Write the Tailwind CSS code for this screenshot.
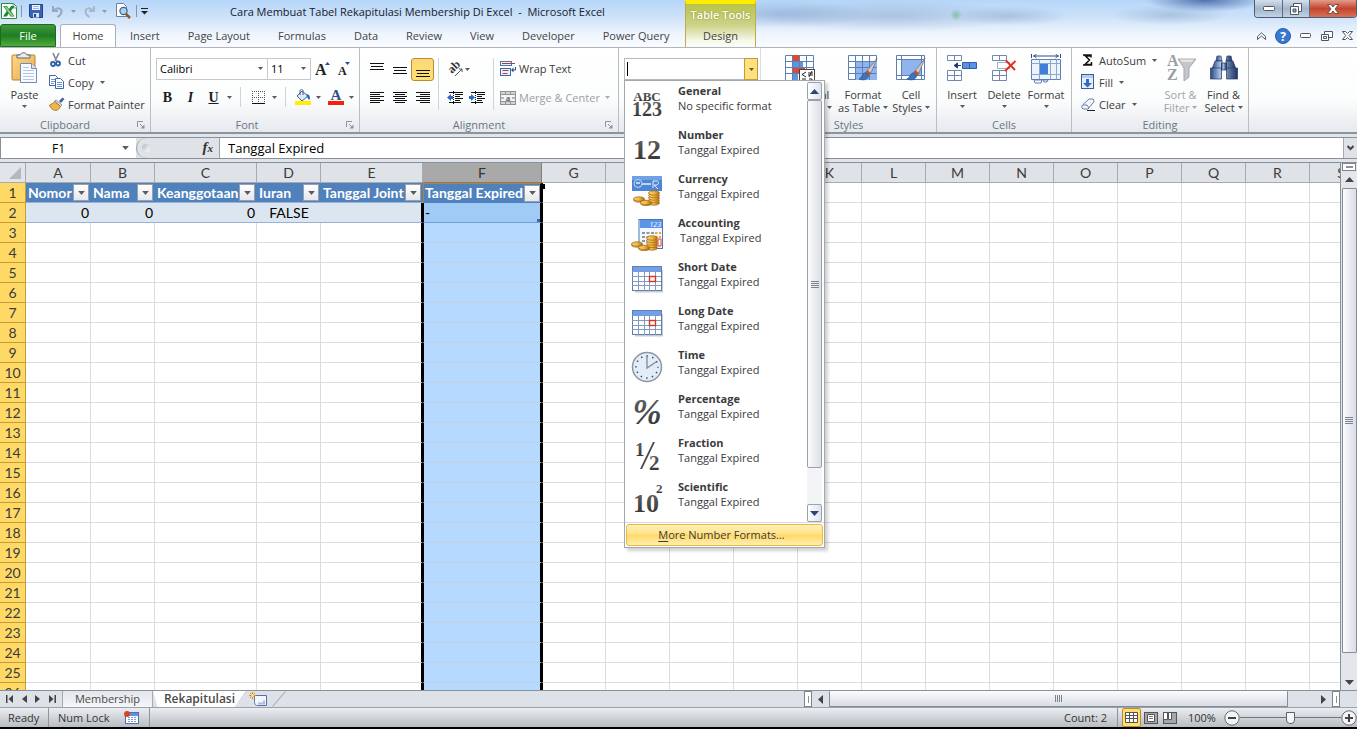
<!DOCTYPE html>
<html lang="en">
<head>
<meta charset="utf-8">
<title>Cara Membuat Tabel Rekapitulasi Membership Di Excel - Microsoft Excel</title>
<script src="https://cdn.jsdelivr.net/npm/@tailwindcss/browser@4"></script>
</head>
<body class="h-screen overflow-hidden flex flex-col bg-[#dfe5ec] font-['Open_Sans','Noto_Sans',sans-serif] text-[11px] leading-[13px] text-[#3b3b3b] select-none">

<svg class="absolute w-0 h-0" aria-hidden="true">
  <defs>
    <linearGradient id="gold" x1="0" y1="0" x2="1" y2="0"><stop offset="0" stop-color="#f7cf74"/><stop offset=".5" stop-color="#f5b942"/><stop offset="1" stop-color="#b06f16"/></linearGradient>
    <linearGradient id="navy" x1="0" y1="0" x2="1" y2="0"><stop offset="0" stop-color="#2c477c"/><stop offset=".35" stop-color="#a9c2e6"/><stop offset="1" stop-color="#1d3260"/></linearGradient>
    <linearGradient id="ink" x1="0" y1="0" x2="0" y2="1"><stop offset="0" stop-color="#6b6b6b"/><stop offset="1" stop-color="#2b2b2b"/></linearGradient>
    <linearGradient id="board" x1="0" y1="0" x2="1" y2="1"><stop offset="0" stop-color="#fbd98c"/><stop offset="1" stop-color="#e9a94a"/></linearGradient>
  </defs>
  <symbol id="caret" viewBox="0 0 5 3"><path d="M0 0h5L2.500 3z" fill="#5a5a5a"/></symbol>
  <symbol id="launch" viewBox="0 0 8 8"><path d="M.5 6V.5H6M3 3l3 3" fill="none" stroke="#8e949c"/><path d="M7.500 3.500v4h-4z" fill="#8e949c"/></symbol>
  <symbol id="brush" viewBox="0 0 22 28"><path d="M21 2 10 16l4 3z" fill="#c9ccd2" stroke="#6d7077" stroke-width=".8"/><path d="m10 15-2 3 4 3 3-2z" fill="#c0562e"/><path d="M8 18c-4 1-3 5-7 7 5 2 10 1 11-4z" fill="#3f74bd" stroke="#28518c" stroke-width=".7"/></symbol>
  <symbol id="calendar" viewBox="0 0 32 28"><path d="M4 26.500h27V5" fill="none" stroke="#c8ccd2" stroke-width="2"/><rect x="1.500" y="1.500" width="29" height="24" fill="#fff" stroke="#5f7fae"/><rect x="2" y="2" width="28" height="4" fill="#6ea0ee"/><path d="M1 6.500h29M1 11.500h29M1 16.500h29M1 20.500h29M7.500 6v20M13.500 6v20M18.500 6v20M24.500 6v20" fill="none" stroke="#7f9bc7"/><rect x="18.500" y="11.500" width="6" height="5" fill="#fff" stroke="#e0301e" stroke-width="1.400"/></symbol>
  <symbol id="coins" viewBox="0 0 28 16"><g fill="url(#gold)" stroke="#9c6412" stroke-width=".7"><ellipse cx="21" cy="13" rx="5.500" ry="2.200"/><ellipse cx="21" cy="10.500" rx="5.500" ry="2.200"/><ellipse cx="21" cy="8" rx="5.500" ry="2.200"/><ellipse cx="21" cy="5.500" rx="5.500" ry="2.200"/><ellipse cx="21" cy="3" rx="5.500" ry="2.200"/><ellipse cx="6" cy="10" rx="5.500" ry="2.200"/><ellipse cx="6" cy="9" rx="5.500" ry="2.200"/><ellipse cx="13" cy="13.500" rx="5.500" ry="2.200"/><ellipse cx="13" cy="12.500" rx="5.500" ry="2.200"/></g></symbol>
</svg>

<!-- Title bar and ribbon tabs -->
<header class="flex shrink-0 h-[47px] bg-[radial-gradient(ellipse_90px_14px_at_780px_14px,rgba(110,145,190,.45),transparent),radial-gradient(ellipse_130px_16px_at_890px_16px,rgba(120,150,190,.4),transparent),radial-gradient(ellipse_6px_6px_at_956px_15px,rgba(90,190,110,.6),transparent),radial-gradient(ellipse_60px_10px_at_1010px_16px,rgba(120,150,190,.4),transparent),radial-gradient(ellipse_60px_10px_at_1170px_15px,rgba(120,150,190,.4),transparent),radial-gradient(ellipse_60px_12px_at_1205px_0px,rgba(40,70,140,.7),transparent),linear-gradient(to_bottom,#b5d6f9_0px,#cfe3f9_18px,#eef5fd_34px,#fafcff_47px)]">
  <div class="w-[685px] flex flex-col shrink-0">
    <div class="flex h-[23px] items-center">
      <div class="w-[150px] flex items-center shrink-0 pl-px">
        <svg class="w-4 h-4" viewBox="0 0 16 16"><path d="M.5.5h12l3 3v12H.5z" fill="#fff" stroke="#2c8a3e"/><path d="M12 1v4h4" fill="#cfe8cf" stroke="#2c8a3e" stroke-width=".7"/><path d="M2 3h4l2 3 2-3h3.500L10 8l3.500 5.500h-4L7.500 10.500 6 13.500H2L5.700 8z" fill="#1f8636"/><path d="m3 3.500 7 9.500h2.500L5.500 3.500z" fill="#8ccf7e"/></svg>
        <span class="w-px h-3 bg-[#8796aa] ml-1 mr-[7px]"></span>
        <button aria-label="Save"><svg class="w-[14px] h-[14px]" viewBox="0 0 14 14"><path d="M.5.5h13v13h-12l-1-1z" fill="#3a64b5" stroke="#23438a"/><path d="M3 1h8v5H3z" fill="#f2f6fc"/><path d="M4 2.500h6M4 4.500h6" stroke="#9fb6dc"/><path d="M4 9h6v4.500H4z" fill="#d6e2f4"/><path d="M5 10h2v3H5z" fill="#23438a"/></svg></button>
        <button aria-label="Undo" class="flex items-center ml-2 gap-[7px]"><svg class="w-[13px] h-[13px]" viewBox="0 0 13 13"><path d="M2 1v5h5M3 5.500C6 2 10.500 3 10.500 6.500S8 11 6.500 12" fill="none" stroke="#98a8bd" stroke-width="2"/></svg><svg class="w-[5px] h-[3px] opacity-50"><use href="#caret"/></svg></button>
        <button aria-label="Redo" class="flex items-center ml-[7px] gap-[6px]"><svg class="w-[13px] h-[13px]" viewBox="0 0 13 13"><path d="M11 1v5H6M10 5.500C7 2 2.500 3 2.500 6.500S5 11 6.500 12" fill="none" stroke="#a9b8cb" stroke-width="2"/></svg><svg class="w-[5px] h-[3px] opacity-50"><use href="#caret"/></svg></button>
        <button aria-label="Print preview" class="ml-2"><svg class="w-4 h-4" viewBox="0 0 16 16"><path d="M1.500.5h7l3 3v10h-10z" fill="#fff" stroke="#6c7f9c"/><circle cx="8.500" cy="8" r="3.600" fill="#a8d2f5" stroke="#4a5f80" stroke-width="1.200"/><path d="m11 11 4 4" stroke="#8a5a2a" stroke-width="2.500"/></svg></button>
        <span class="w-px h-3 bg-[#8796aa] ml-[5px] mr-1"></span>
        <button aria-label="Customize toolbar"><svg class="w-[7px] h-2" viewBox="0 0 7 8"><path d="M0 1.500h7" stroke="#222"/><path d="M0 4h7L3.500 7.500z" fill="#222"/></svg></button>
      </div>
      <h1 class="flex-1 text-center text-[#16202c] text-[11px] whitespace-pre">Cara Membuat Tabel Rekapitulasi Membership Di Excel  -  Microsoft Excel</h1>
    </div>
    <nav class="flex h-[25px] pt-px items-stretch text-[#444]">
      <button class="w-14 mr-1 rounded-t-[3px] border border-[#1d6b1d] text-white bg-[linear-gradient(to_bottom,#3f9a3c,#1f7d24_50%,#4fae3c)]">File</button>
      <button class="relative z-10 w-14 rounded-t-[3px] border border-b-0 border-[#a9b0ba] bg-white">Home</button>
      <button class="px-[14px]">Insert</button>
      <button class="px-[14px]">Page Layout</button>
      <button class="px-[14px]">Formulas</button>
      <button class="px-[14px]">Data</button>
      <button class="px-[14px]">Review</button>
      <button class="px-[14px]">View</button>
      <button class="px-[14px]">Developer</button>
      <button class="px-[14px]">Power Query</button>
    </nav>
  </div>
  <div class="w-[71px] shrink-0 flex flex-col border-t-4 border-x border-t-[#ffec00] border-x-[#c2a84a] bg-[linear-gradient(to_bottom,#b9c348,#cdd38a_50%,#f6f8e8_85%,#fcfdf8)]">
    <span class="h-5 flex items-center justify-center text-white font-semibold whitespace-nowrap [text-shadow:0_0_2px_#7f8a20]">Table Tools</span>
    <button class="flex-1 text-[#444]">Design</button>
  </div>
  <div class="flex-1 flex flex-col items-end">
    <div class="flex h-[18px] w-[103px] border border-t-0 border-[#4d5d73] rounded-b-[4px] overflow-hidden">
      <button aria-label="Minimize" class="w-7 flex items-center justify-center border-r border-[#5d6d83] bg-[linear-gradient(to_bottom,#d4dfec,#a4b6cc_50%,#c3d2e4)]"><svg class="w-3 h-[5px]" viewBox="0 0 12 5"><rect x=".5" y=".5" width="11" height="4" rx="1" fill="#fff" stroke="#4c5868"/></svg></button>
      <button aria-label="Restore" class="w-[27px] flex items-center justify-center border-r border-[#5d6d83] bg-[linear-gradient(to_bottom,#d4dfec,#a4b6cc_50%,#c3d2e4)]"><svg class="w-3 h-3" viewBox="0 0 12 12"><path d="M3.500.5h8v8h-8z" fill="#fff" stroke="#4c5868"/><path d="M.5 3.500h8v8h-8z" fill="#fff" stroke="#4c5868"/><path d="M3 6h3v3H3z" fill="#8fa0b5" stroke="#4c5868"/></svg></button>
      <button aria-label="Close" class="flex-1 flex items-center justify-center bg-[linear-gradient(to_bottom,#e39c8b,#c4452d_50%,#d8705a)]"><svg class="w-3 h-[10px]" viewBox="0 0 12 10"><path d="M.5.5h3.500l2 2.500L8 .5h3.500L8 5l3.500 4.500H8L6 7 4 9.500H.5L4 5z" fill="#fff" stroke="#5c3a3a" stroke-width=".8"/></svg></button>
    </div>
    <div class="flex items-center h-[29px] pt-[6px]">
      <button aria-label="Collapse ribbon" class="w-[22px] flex justify-center"><svg class="w-[9px] h-2" viewBox="0 0 9 8"><path d="M.5 4.500 4.500.8l4 3.700v3L4.500 4 .5 7.500z" fill="#fff" stroke="#4d5663"/></svg></button>
      <button aria-label="Help" class="w-[22px] flex justify-center"><svg class="w-4 h-4" viewBox="0 0 16 16"><circle cx="8" cy="8" r="7.500" fill="#3b78cf" stroke="#2a5ba6"/><text x="8" y="12.500" text-anchor="middle" font-family="Open Sans" font-weight="700" font-size="12" fill="#fff">?</text></svg></button>
      <button aria-label="Minimize workbook" class="w-[22px] flex justify-center"><svg class="w-[11px] h-[5px]" viewBox="0 0 11 5"><rect x=".5" y=".5" width="10" height="4" rx="1" fill="#fff" stroke="#4d5663"/></svg></button>
      <button aria-label="Restore workbook" class="w-[22px] flex justify-center"><svg class="w-3 h-3" viewBox="0 0 12 12"><path d="M3.500 1.500h8v6h-8z" fill="#fff" stroke="#4d5663"/><path d="M.5 4.500h7v6h-7z" fill="#fff" stroke="#4d5663"/><path d="M2.500 6.500h3v2h-3z" fill="none" stroke="#4d5663"/></svg></button>
      <button aria-label="Close workbook" class="w-[19px] flex justify-center"><svg class="w-[11px] h-[9px]" viewBox="0 0 11 9"><path d="M.5.5h3l2 2 2-2h3l-3.300 4 3.300 4h-3l-2-2-2 2h-3l3.300-4z" fill="#fff" stroke="#4d5663"/></svg></button>
    </div>
  </div>
</header>

<!-- Ribbon -->
<section class="flex shrink-0 h-[87px] border-t border-b-2 border-t-[#aeb5be] border-b-[#8f949b] bg-[linear-gradient(to_bottom,#ffffff,#fcfdfd_60%,#e6e9ee)]">

  <div class="w-[151px] shrink-0 flex flex-col border-r border-[#b9bec5]">
    <div class="flex h-[68px] pt-px">
      <button class="w-[49px] flex flex-col items-center pt-[3px]">
        <svg class="w-[27px] h-[32px]" viewBox="0 0 27 32"><rect x="1" y="3" width="23" height="25" rx="1" fill="url(#board)" stroke="#b9822f"/><path d="M6 6V3h3c1-3 6-3 7 0h3v3z" fill="#e8eaee" stroke="#5f666f"/><path d="M9.500 11.500h11l5 5v14h-16z" fill="#f8fbff" stroke="#6e8cb5"/><path d="M20.500 11.500v5h5" fill="#dbe7f5" stroke="#6e8cb5"/><path d="M12 15.500h6M12 18.500h11M12 21.500h11M12 24.500h11M12 27.500h11" stroke="#b3c6e0"/></svg>
        <span class="mt-[4px]">Paste</span>
        <svg class="w-[5px] h-[3px] mt-1"><use href="#caret"/></svg>
      </button>
      <div class="flex flex-col">
        <button class="flex items-center h-[22px] gap-[3px]"><svg class="w-4 h-[14px]" viewBox="0 0 16 14"><path d="M4 0l3.500 8M10 0 6 8" stroke="#7d8794" stroke-width="1.600"/><circle cx="4" cy="11" r="2" fill="none" stroke="#2b5daf" stroke-width="1.800"/><circle cx="9" cy="10.500" r="2" fill="none" stroke="#2b5daf" stroke-width="1.800"/></svg>Cut</button>
        <button class="flex items-center h-[22px] gap-[3px]"><svg class="w-4 h-[14px]" viewBox="0 0 16 14"><path d="M.5.5h6l2 2v8h-8z" fill="#fff" stroke="#3f66a6"/><path d="M2 4.500h4M2 6.500h4M2 8.500h3" stroke="#6f97d4"/><path d="M6.500 3.500h5l3 3v7h-8z" fill="#fff" stroke="#3f66a6"/><path d="M8 7.500h5M8 9.500h5M8 11.500h5" stroke="#6f97d4"/></svg>Copy<svg class="w-[5px] h-[3px] ml-[3px]"><use href="#caret"/></svg></button>
        <button class="flex items-center h-[22px] gap-[3px] whitespace-nowrap"><svg class="w-4 h-[14px]" viewBox="0 0 16 14"><path d="m10 4 3.500-3.500 2 1.500L12 6z" fill="#3d63a8"/><path d="m7 3 6 5-1.500 1.500L5.500 4z" fill="#d6dbe2" stroke="#6d7685" stroke-width=".7"/><path d="M5.500 4.500C4 7 2 7 .5 8c1 3 3 5 6 5.500 2 0 4-2 5-4z" fill="#f0b84c" stroke="#9c6a1c" stroke-width=".8"/></svg>Format Painter</button>
      </div>
    </div>
    <div class="flex items-center px-[5px] pt-[2px]"><span class="flex-1 text-center text-[#6a7686] pr-3">Clipboard</span><svg class="w-2 h-2"><use href="#launch"/></svg></div>
  </div>

  <div class="w-[209px] shrink-0 flex flex-col border-r border-[#b9bec5]">
    <div class="flex flex-col h-[68px] pt-[10px] pl-[5px] gap-[6px]">
      <div class="flex items-center h-[22px]">
        <div class="relative w-[112px]"><select aria-label="Font" class="appearance-none w-full h-[22px] border border-[#c3c9d1] bg-white px-[3px] pb-[2px] text-black"><option>Calibri</option></select><svg class="absolute right-[5px] top-[9px] w-[5px] h-[3px] pointer-events-none"><use href="#caret"/></svg></div>
        <div class="relative w-11 -ml-px"><select aria-label="Font size" class="appearance-none w-full h-[22px] border border-[#c3c9d1] bg-white px-[3px] pb-[2px] text-black"><option>11</option></select><svg class="absolute right-[5px] top-[9px] w-[5px] h-[3px] pointer-events-none"><use href="#caret"/></svg></div>
        <button aria-label="Grow font" class="ml-1"><svg class="w-[18px] h-[18px]" viewBox="0 0 18 18"><text x="0" y="15" font-family="Liberation Serif" font-weight="700" font-size="16" fill="#222">A</text><path d="M10 5h5L12.500 2z" fill="#2b4f93"/></svg></button>
        <button aria-label="Shrink font" class="ml-1"><svg class="w-[18px] h-[18px]" viewBox="0 0 18 18"><text x="1" y="15" font-family="Liberation Serif" font-weight="700" font-size="12" fill="#222">A</text><path d="M8 2h5l-2.500 3z" fill="#2b4f93"/></svg></button>
      </div>
      <div class="flex items-center h-[22px] font-['Liberation_Serif',serif] text-[14px] text-[#1c1c1c]">
        <button aria-label="Bold" class="w-[23px] font-bold">B</button>
        <button aria-label="Italic" class="w-[23px] italic font-bold">I</button>
        <button aria-label="Underline" class="w-[23px] font-bold underline">U</button>
        <svg class="w-[5px] h-[3px] ml-[2px]"><use href="#caret"/></svg>
        <span class="w-px h-5 bg-[#cfd4da] ml-2 mr-[5px]"></span>
        <button aria-label="Borders" class="w-6 flex justify-center"><svg class="w-[13px] h-[13px]" viewBox="0 0 13 13"><path d="M.5 0v12M6.500 0v12M12.500 0v12M0 .5h13M0 6.500h13" stroke="#555" stroke-dasharray="1 1"/><path d="M0 12.500h13" stroke="#111"/></svg></button>
        <svg class="w-[5px] h-[3px] ml-[2px]"><use href="#caret"/></svg>
        <span class="w-px h-5 bg-[#cfd4da] ml-2 mr-[5px]"></span>
        <button aria-label="Fill color" class="w-6 flex justify-center"><svg class="w-4 h-[17px]" viewBox="0 0 16 17"><path d="M7 2 2 7l5 5 6-5z" fill="#dde9f8" stroke="#44618f"/><path d="M5 6V2c0-2 3-2 3 0v4" fill="none" stroke="#44618f"/><path d="M12 5c3 1 3.500 4 2.500 6-2-1-2-3-3-4z" fill="#2c62b8"/><path d="M0 12h16v4H0z" fill="#ffef00"/></svg></button>
        <svg class="w-[5px] h-[3px] ml-px"><use href="#caret"/></svg>
        <button aria-label="Font color" class="w-6 flex justify-center ml-[3px]"><svg class="w-4 h-[17px]" viewBox="0 0 16 17"><text x="8" y="11" text-anchor="middle" font-family="Liberation Serif" font-weight="700" font-size="15" fill="#2d4f8f">A</text><path d="M0 12h16v4H0z" fill="#f91f0d"/></svg></button>
        <svg class="w-[5px] h-[3px] ml-px"><use href="#caret"/></svg>
      </div>
    </div>
    <div class="flex items-center px-[5px] pt-[2px]"><span class="flex-1 text-center text-[#6a7686] pr-2">Font</span><svg class="w-2 h-2"><use href="#launch"/></svg></div>
  </div>

  <div class="w-[259px] shrink-0 flex flex-col border-r border-[#b9bec5]">
    <div class="flex h-[68px] pt-[10px] pl-[5px]">
      <div class="grid grid-cols-3 gap-y-[7px] w-[69px] h-[51px]">
        <button aria-label="Top align" class="flex items-center justify-center"><svg class="w-[14px] h-[14px]" viewBox="0 0 14 14"><path d="M0 .5h14M1 3.500h12M0 6.500h14" stroke="#111"/></svg></button>
        <button aria-label="Middle align" class="flex items-center justify-center"><svg class="w-[14px] h-[14px]" viewBox="0 0 14 14"><path d="M0 4.500h14M1 7.500h12M0 10.500h14" stroke="#111"/></svg></button>
        <button aria-label="Bottom align" class="flex items-center justify-center rounded-[3px] border border-[#c28a30] bg-[linear-gradient(to_bottom,#fcd97a,#ffdf6e)]"><svg class="w-[14px] h-[14px]" viewBox="0 0 14 14"><path d="M0 7.500h14M1 10.500h12M0 13.500h14" stroke="#111"/></svg></button>
        <button aria-label="Align left" class="flex items-center justify-center"><svg class="w-[14px] h-[14px]" viewBox="0 0 14 14"><path d="M0 .5h14M0 2.500h10M0 4.500h14M0 6.500h10M0 8.500h14M0 10.500h10" stroke="#111"/></svg></button>
        <button aria-label="Center" class="flex items-center justify-center"><svg class="w-[14px] h-[14px]" viewBox="0 0 14 14"><path d="M0 .5h14M2 2.500h10M0 4.500h14M2 6.500h10M0 8.500h14M2 10.500h10" stroke="#111"/></svg></button>
        <button aria-label="Align right" class="flex items-center justify-center"><svg class="w-[14px] h-[14px]" viewBox="0 0 14 14"><path d="M0 .5h14M4 2.500h10M0 4.500h14M4 6.500h10M0 8.500h14M4 10.500h10" stroke="#111"/></svg></button>
      </div>
      <span class="w-px h-[52px] bg-[#cfd4da] ml-1 mr-[7px]"></span>
      <div class="flex flex-col gap-[7px] w-[47px]">
        <button aria-label="Orientation" class="flex items-center h-[22px] gap-[2px] pl-px"><svg class="w-4 h-4" viewBox="0 0 16 16"><text x="0" y="0" transform="translate(5 13) rotate(-45)" font-family="Liberation Serif" font-weight="700" font-size="12" fill="#333">ab</text><path d="M8 15l7-7M15 8v3M15 8h-3" stroke="#555" fill="none"/></svg><svg class="w-[5px] h-[3px]"><use href="#caret"/></svg></button>
        <div class="flex h-[22px] items-center gap-[6px] pl-px">
          <button aria-label="Decrease indent"><svg class="w-4 h-[14px]" viewBox="0 0 16 14"><path d="M2 1.500h14M8 3.500h8M8 5.500h5M8 7.500h8M8 9.500h5M2 11.500h12" stroke="#111"/><path d="M6.500 0v14" stroke="#111" stroke-dasharray="1 1"/><path d="M0 6.500 4 3v2h2v3H4v2z" fill="#2f6bc4"/></svg></button>
          <button aria-label="Increase indent"><svg class="w-4 h-[14px]" viewBox="0 0 16 14"><path d="M2 1.500h14M8 3.500h8M8 5.500h5M8 7.500h8M8 9.500h5M2 11.500h12" stroke="#111"/><path d="M6.500 0v14" stroke="#111" stroke-dasharray="1 1"/><path d="M6 6.500 2 3v2H0v3h2v2z" fill="#2f6bc4"/></svg></button>
        </div>
      </div>
      <span class="w-px h-[52px] bg-[#cfd4da] mr-[6px]"></span>
      <div class="flex flex-col gap-[7px] whitespace-nowrap">
        <button class="flex items-center h-[22px] pb-px gap-[3px]"><svg class="w-4 h-[15px]" viewBox="0 0 16 15"><rect x=".5" y=".5" width="11" height="4" fill="#eaf1fb" stroke="#5574a8"/><path d="M2 2.500h13" stroke="#a0453a"/><rect x=".5" y="7.500" width="10" height="7" fill="#eaf1fb" stroke="#3d65a8"/><path d="M2.500 9.500h6M2.500 12.500h5" stroke="#a0453a"/><path d="M15.500 6v3H13" fill="none" stroke="#2c4f8f"/><path d="M13.500 6.500v5l-2.500-2.500z" fill="#2c4f8f"/></svg>Wrap Text</button>
        <button disabled class="flex items-center h-[22px] pb-px gap-[3px] text-[#9aa0a8]"><svg class="w-4 h-[14px]" viewBox="0 0 16 14"><rect x=".5" y=".5" width="15" height="13" fill="#d3d5d8" stroke="#8f9297"/><path d="M.5 3.500h15M.5 10.500h15M5.500.500v3M10.500.500v3M5.500 10.500v3M10.500 10.500v3" stroke="#8f9297"/><path d="M1 4h14v6H1z" fill="#f5f5f5"/><text x="8" y="9.500" text-anchor="middle" font-family="Liberation Serif" font-weight="700" font-size="9" fill="#666">a</text><path d="M1 7h3M12 7h3" stroke="#777"/></svg>Merge &amp; Center<svg class="w-[5px] h-[3px] ml-[2px] opacity-50"><use href="#caret"/></svg></button>
      </div>
    </div>
    <div class="flex items-center px-[5px] pt-[2px]"><span class="flex-1 text-center text-[#6a7686] pr-3">Alignment</span><svg class="w-2 h-2"><use href="#launch"/></svg></div>
  </div>

  <div class="w-[142px] shrink-0 border-r border-[#d9dde2] pt-[10px] pl-[5px]">
    <div class="relative w-[134px]">
      <div class="flex items-center h-[22px] border border-[#b3b9c1] bg-white">
        <span class="w-px h-[14px] bg-black ml-[2px]"></span>
        <input type="text" aria-label="Number format" class="flex-1 min-w-0 h-full px-1 outline-none">
        <button aria-label="Open number formats" class="w-[14px] h-[22px] -my-px -mr-px flex items-center justify-center border border-[#c49a3c] bg-[#ffe07f]"><svg class="w-[5px] h-[3px]"><use href="#caret"/></svg></button>
      </div>

      <!-- Number format menu -->
      <div class="absolute z-30 left-0 top-[22px] w-[201px] bg-white border border-[#a3a8b0] shadow-[3px_3px_3px_rgba(0,0,0,.18)]">
        <div class="flex border-b border-[#d8dbe0]">
          <div role="listbox" aria-label="Number formats" class="flex-1 flex flex-col pb-px text-[#3b3b3b]">
            <div role="option" class="flex h-11 pl-[6px]"><svg class="w-8 h-9 mt-[5px]" viewBox="0 0 32 36" font-family="Liberation Serif" font-weight="700" fill="url(#ink)"><text x="16" y="15" text-anchor="middle" font-size="13">ABC</text><text x="16" y="30" text-anchor="middle" font-size="20">123</text></svg><div class="pl-[15px] pt-[2px] leading-[15px]"><b class="block">General</b>No specific format</div></div>
            <div role="option" class="flex h-11 pl-[6px]"><svg class="w-8 h-9 mt-[5px]" viewBox="0 0 32 36" font-family="Liberation Serif" font-weight="700" fill="url(#ink)"><text x="16" y="29" text-anchor="middle" font-size="28">12</text></svg><div class="pl-[15px] pt-[2px] leading-[15px]"><b class="block">Number</b>Tanggal Expired</div></div>
            <div role="option" class="flex h-11 pl-[6px]"><svg class="w-8 h-8 mt-[6px]" viewBox="0 0 32 32"><path d="M1 1h30v15H1z" fill="#4f86d3"/><path d="M1 1h30v4H1z" fill="#6fa2e4"/><circle cx="7" cy="8.500" r="4" fill="none" stroke="#b9d7f8"/><path d="M11 9h9M5 8h4" stroke="#b9d7f8" stroke-width="2"/><path d="M22 13V6h4c2 0 2 3 0 4h-3l4 4" fill="none" stroke="#e3f0ff"/><use href="#coins" x="2" y="15" width="28" height="16"/></svg><div class="pl-[15px] pt-[2px] leading-[15px]"><b class="block">Currency</b>Tanggal Expired</div></div>
            <div role="option" class="flex h-11 pl-[6px]"><svg class="w-8 h-8 mt-[6px]" viewBox="0 0 32 32"><rect x="8" y=".5" width="23.500" height="29" fill="#f4f8fe" stroke="#4a76bb"/><path d="M9 1h22v8H9z" fill="#5b95e6"/><text x="30" y="8" text-anchor="end" font-family="Open Sans" font-style="italic" font-size="7" fill="#fff">123</text><path d="M11 13h3v2h-3zM15.500 13h3v2h-3zM20 13h3v2h-3zM11 17h3v2h-3zM15.500 17h3v2h-3zM11 21h3v2h-3zM15.500 21h3v2h-3z" fill="#8d96a5"/><path d="M24 13h2.500v2H24zM28 13h2v2h-2zM24 17h2.500v2H24zM28 17h2v2h-2z" fill="#f0a536"/><path d="M27 20h3v7h-3z" fill="#fff" stroke="#e0432f"/><use href="#coins" x="0" y="16" width="28" height="16"/></svg><div class="pl-[15px] pt-[2px] leading-[15px]"><b class="block">Accounting</b><span class="pl-[2px]">Tanggal Expired</span></div></div>
            <div role="option" class="flex h-11 pl-[6px]"><svg class="w-8 h-7 mt-[8px]"><use href="#calendar"/></svg><div class="pl-[15px] pt-[2px] leading-[15px]"><b class="block">Short Date</b>Tanggal Expired</div></div>
            <div role="option" class="flex h-11 pl-[6px]"><svg class="w-8 h-7 mt-[8px]"><use href="#calendar"/></svg><div class="pl-[15px] pt-[2px] leading-[15px]"><b class="block">Long Date</b>Tanggal Expired</div></div>
            <div role="option" class="flex h-11 pl-[6px]"><svg class="w-8 h-8 mt-[6px]" viewBox="0 0 32 32"><circle cx="16" cy="16" r="14.500" fill="#e3edf7" stroke="#8b97a5" stroke-width="1.500"/><circle cx="16" cy="16" r="11" fill="none" stroke="#45505d" stroke-width="1.500" stroke-dasharray="1.500 4.260" stroke-dashoffset=".75"/><path d="M16 4v13l9-6" fill="none" stroke="#7d8a98" stroke-width="1.300"/></svg><div class="pl-[15px] pt-[2px] leading-[15px]"><b class="block">Time</b>Tanggal Expired</div></div>
            <div role="option" class="flex h-11 pl-[6px]"><svg class="w-8 h-9 mt-[5px]" viewBox="0 0 32 36" font-family="Liberation Serif" font-weight="700" font-style="italic" fill="url(#ink)"><text x="16" y="30" text-anchor="middle" font-size="35">%</text></svg><div class="pl-[15px] pt-[2px] leading-[15px]"><b class="block">Percentage</b>Tanggal Expired</div></div>
            <div role="option" class="flex h-11 pl-[6px]"><svg class="w-8 h-9 mt-[5px]" viewBox="0 0 32 36" font-family="Liberation Serif" font-weight="700" fill="url(#ink)"><text x="4" y="18" font-size="19">1</text><text x="18" y="32" font-size="21">2</text><path d="M22 4h2L11 31H9z" fill="#4a4a4a"/></svg><div class="pl-[15px] pt-[2px] leading-[15px]"><b class="block">Fraction</b>Tanggal Expired</div></div>
            <div role="option" class="flex h-11 pl-[6px]"><svg class="w-8 h-9 mt-[5px]" viewBox="0 0 32 36" font-family="Liberation Serif" font-weight="700" fill="url(#ink)"><text x="2" y="30" font-size="26">10</text><text x="25" y="11" font-size="13">2</text></svg><div class="pl-[15px] pt-[2px] leading-[15px]"><b class="block">Scientific</b>Tanggal Expired</div></div>
          </div>
          <div class="w-[15px] mr-[2px] flex flex-col bg-[#f3f4f6]">
            <button aria-label="Scroll up" class="h-[18px] mt-px flex items-center justify-center rounded-[2px] border border-[#9aa1ad] bg-[linear-gradient(to_right,#fff,#dfe3ea)]"><svg class="w-[9px] h-[5px]" viewBox="0 0 9 5"><path d="M0 5h9L4.500 0z" fill="#2c4577"/></svg></button>
            <div class="h-[368px] flex items-center justify-center rounded-[2px] border border-[#9aa1ad] bg-[linear-gradient(to_right,#fbfbfc,#dcdfe6)]"><svg class="w-2 h-[7px]" viewBox="0 0 8 7"><path d="M0 .5h8M0 2.500h8M0 4.500h8M0 6.500h8" stroke="#7c838e"/></svg></div>
            <button aria-label="Scroll down" class="h-[18px] mt-auto flex items-center justify-center rounded-[2px] border border-[#9aa1ad] bg-[linear-gradient(to_right,#fff,#dfe3ea)]"><svg class="w-[9px] h-[5px]" viewBox="0 0 9 5"><path d="M0 0h9L4.500 5z" fill="#2c4577"/></svg></button>
          </div>
        </div>
        <button class="block w-[197px] h-[22px] mx-px mt-px mb-px rounded-[3px] border border-[#e9b93c] bg-[linear-gradient(to_bottom,#fff0b8,#ffe38a_45%,#ffd965_50%,#ffeeb0)] pr-[6px] pb-[2px] text-[#3b3b3b]"><u class="underline-offset-2">M</u>ore Number Formats...</button>
      </div>
    </div>
  </div>

  <div class="w-[176px] shrink-0 flex flex-col border-r border-[#b9bec5]">
    <div class="flex h-[68px] pt-[6px] leading-[13px]">
      <button class="w-[78px] flex flex-col items-center"><svg class="w-[30px] h-[30px]" viewBox="0 0 30 30"><path d="M.5 1.500h28v26H.5z" fill="#fff" stroke="#5c7fb5"/><path d="M7 1h7v7H7z" fill="#e0492f"/><path d="M7 8h11v6H7z" fill="#5d96e0"/><path d="M7 14h13v6H7z" fill="#e0492f"/><path d="M7 20h6v7H7z" fill="#5d96e0"/><path d="M7.500 1v26M14.500 1v26M21.500 1v26M.5 7.500h28M.5 13.500h28M.5 19.500h28" stroke="#5c7fb5" fill="none"/><rect x="14.500" y="15.500" width="15" height="14" fill="#fff" stroke="#444"/><path d="m21 18-4 2.500 4 2.500M17 25h4M23 19h5M23 21h5M27 17l-3 6M24 25h3v3h-3" fill="none" stroke="#222"/></svg><span class="mt-[4px] leading-[13px]">Conditional<br>Formatting <svg class="inline w-[5px] h-[3px] mb-[3px]"><use href="#caret"/></svg></span></button>
      <button class="w-[48px] flex flex-col items-center whitespace-nowrap"><svg class="w-[30px] h-[30px]" viewBox="0 0 30 30"><path d="M.5 1.500h28v24H.5z" fill="#fff" stroke="#5c7fb5"/><path d="M7 7h22v19H7z" fill="#8fb4f0"/><path d="M7.500 1v25M14.500 1v25M21.500 1v25M.5 7.500h28M.5 13.500h28M.5 19.500h28" stroke="#5c7fb5" fill="none"/><use href="#brush" x="10" y="1" width="20" height="28"/></svg><span class="mt-[4px] leading-[13px]">Format<br>as Table <svg class="inline w-[5px] h-[3px] mb-[3px]"><use href="#caret"/></svg></span></button>
      <button class="w-[48px] flex flex-col items-center whitespace-nowrap"><svg class="w-[30px] h-[30px]" viewBox="0 0 30 30"><path d="M.5 1.500h28v24H.5z" fill="#fff" stroke="#5c7fb5"/><path d="M5 6h20v15H5z" fill="#8fb4f0"/><path d="M5.500 1v25M25.500 1v25M.5 5.500h28M.5 21.500h28" stroke="#5c7fb5" fill="none"/><use href="#brush" x="10" y="1" width="20" height="28"/></svg><span class="mt-[4px] leading-[13px]">Cell<br>Styles <svg class="inline w-[5px] h-[3px] mb-[3px]"><use href="#caret"/></svg></span></button>
    </div>
    <span class="text-center text-[#6a7686] pt-[2px]">Styles</span>
  </div>

  <div class="w-[135px] shrink-0 flex flex-col border-r border-[#b9bec5]">
    <div class="flex h-[68px] pt-[6px] pl-1">
      <button class="w-[42px] flex flex-col items-center"><svg class="w-[30px] h-[30px]" viewBox="0 0 30 30"><path d="M.5 1.500h14v5H.5zM7.500 1.500v5M.5 16.500h14v10H.5zM7.500 16.500v10M.5 21.500h14" fill="#fff" stroke="#7189b0"/><path d="M15.500 8.500h14v6h-14z" fill="#5b93e2" stroke="#2f5fa8"/><path d="M22.500 8.500v6" stroke="#2f5fa8"/><path d="M14 11.500H8M10.500 9 7 11.500l3.500 2.500z" fill="#223d72" stroke="#223d72"/></svg><span class="mt-[4px]">Insert</span><svg class="w-[5px] h-[3px] mt-1"><use href="#caret"/></svg></button>
      <button class="w-[42px] flex flex-col items-center"><svg class="w-[30px] h-[30px]" viewBox="0 0 30 30"><path d="M3.500 1.500h14v5h-14zM10.500 1.500v5M3.500 16.500h14v10h-14zM10.500 16.500v10M3.500 21.500h14" fill="#fff" stroke="#7189b0"/><path d="M8.500 8.500h12v6h-12z" fill="#fff" stroke="#4b6798" stroke-dasharray="1 1"/><path d="M17 6.500 26 16M26.500 7 16 17" stroke="#e2321b" stroke-width="2"/></svg><span class="mt-[4px]">Delete</span><svg class="w-[5px] h-[3px] mt-1"><use href="#caret"/></svg></button>
      <button class="w-[42px] flex flex-col items-center"><svg class="w-[30px] h-[30px]" viewBox="0 0 30 30"><path d="M.5 0v4M29.500 0v4M2 2h26M5.500 0 3 2l2.500 2M24.500 0 27 2l-2.500 2" fill="none" stroke="#2b4b84"/><path d="M.5 5.500h29v20H.5z" fill="#eef4fc" stroke="#5c7fb5"/><path d="M8.500 5.500v20M19.500 5.500v20M25.500 5.500v20M.5 9.500h29M.5 20.500h29" fill="none" stroke="#8ba6cf"/><path d="M9 10h8v10H9z" fill="#3f7fd8"/><path d="M3 26h8l-1 3H4zM12 26h5l-1 2h-3z" fill="#fff" stroke="#5c7fb5"/></svg><span class="mt-[4px]">Format</span><svg class="w-[5px] h-[3px] mt-1"><use href="#caret"/></svg></button>
    </div>
    <span class="text-center text-[#6a7686] pt-[2px]">Cells</span>
  </div>

  <div class="w-[177px] shrink-0 flex flex-col border-r border-[#b9bec5]">
    <div class="flex h-[68px] pl-[9px]">
      <div class="flex flex-col pt-px w-[78px]">
        <button class="flex items-center h-[22px] gap-1 whitespace-nowrap"><svg class="w-[14px] h-[14px]" viewBox="0 0 14 14"><path d="M2 2h8v2.500M10 3H4.500l4 4-4.500 4.500H10M10.500 9v3H2" fill="none" stroke="#111" stroke-width="1.500"/></svg>AutoSum<svg class="w-[5px] h-[3px] ml-[2px]"><use href="#caret"/></svg></button>
        <button class="flex items-center h-[22px] gap-1"><svg class="w-[14px] h-4" viewBox="0 0 14 16"><rect x=".5" y=".5" width="12" height="14" fill="#e6effb" stroke="#3b5f9c"/><path d="M1 1h11v3H1z" fill="#b5cef2"/><path d="M5 5h3v4h3l-4.500 4.500L2 9h3z" fill="#2e6bc9"/></svg>Fill<svg class="w-[5px] h-[3px] ml-[2px]"><use href="#caret"/></svg></button>
        <button class="flex items-center h-[22px] gap-1"><svg class="w-[14px] h-[13px]" viewBox="0 0 14 13"><path d="M8 1h4c1.500 1 1 3 0 4l-5 6H2C.5 10 .5 8 1.500 7z" fill="#f2f6fc" stroke="#6b7f9f"/><path d="M2 7h4l2 3" fill="none" stroke="#6b7f9f"/><path d="M6 12.500h8" stroke="#222"/></svg>Clear<svg class="w-[5px] h-[3px] ml-[2px]"><use href="#caret"/></svg></button>
      </div>
      <button disabled class="w-[43px] flex flex-col items-center pt-[6px] text-[#a0a4aa] whitespace-nowrap"><svg class="w-[30px] h-[30px]" viewBox="0 0 30 30"><g font-family="Liberation Serif" font-weight="700" font-size="16" fill="#9b9ea3"><text x="1" y="12">A</text><text x="1" y="26">Z</text></g><path d="M12 5h18l-7 9v9l-5 4V14z" fill="#c4c6ca" stroke="#a6a8ac"/><path d="M14 5.500h14l-2 2.500H16z" fill="#e3e4e6"/></svg><span class="mt-[4px] leading-[13px]">Sort &amp;<br>Filter <svg class="inline w-[5px] h-[3px] mb-[3px] opacity-50"><use href="#caret"/></svg></span></button>
      <button class="w-[43px] flex flex-col items-center pt-[6px] whitespace-nowrap"><svg class="w-[30px] h-[30px]" viewBox="0 0 30 30"><g fill="url(#navy)" stroke="#22396a" stroke-width=".7"><path d="M8 2h4l1 5H7zM18 2h4l1 5h-6z"/><path d="M6 7h7v8H3zM17 7h7l3 8H17z"/><path d="M1.500 14h11v11h-11zM17.500 14h11v11h-11z"/><path d="M12.500 9h5v7h-5z"/></g></svg><span class="mt-[4px] leading-[13px]">Find &amp;<br>Select <svg class="inline w-[5px] h-[3px] mb-[3px]"><use href="#caret"/></svg></span></button>
    </div>
    <span class="text-center text-[#6a7686] pt-[2px]">Editing</span>
  </div>
</section>

<!-- Formula bar -->
<section class="flex shrink-0 h-[22px] mt-[3px] mb-[3px] border-y border-[#8b9098] bg-[#dfe3e8]">
  <div class="w-[136px] flex items-center bg-white border-l border-[#8b9098]">
    <input aria-label="Name box" value="F1" class="w-[115px] text-center text-[12px] text-black bg-transparent outline-none">
    <button aria-label="Name list" class="ml-[6px]"><svg class="w-[7px] h-1"><use href="#caret"/></svg></button>
  </div>
  <div class="w-[84px] flex items-center justify-between rounded-l-full bg-[#dfe2e7] border-l border-[#9ba0a8] border-r pl-[5px] pr-[6px]">
    <span class="w-2 h-2 rounded-full bg-[linear-gradient(135deg,#b4b9c0,#ffffff)]"></span>
    <button aria-label="Insert function" class="font-['Liberation_Serif',serif] italic font-bold text-[15px] text-[#333]">f<span class="text-[11px]">x</span></button>
  </div>
  <input aria-label="Formula" value="Tanggal Expired" class="flex-1 min-w-0 bg-white pl-2 text-[13px] text-black outline-none">
  <button aria-label="Expand formula bar" class="w-[14px] flex items-center justify-center border-l border-[#a6abb3]"><svg class="w-[7px] h-[6px]" viewBox="0 0 7 6"><path d="M.5 1 3.500 4 6.500 1" fill="none" stroke="#444" stroke-width="2"/></svg></button>
</section>

<!-- Worksheet -->
<main class="flex flex-1 min-h-0 border-t border-[#8b9098]">
  <div class="flex-1 min-w-0 overflow-hidden bg-white font-[Lato,'Open_Sans',sans-serif] text-[14px] text-black">
    <table class="table-fixed border-separate border-spacing-0 w-[1373px] leading-[18px]">
      <colgroup id="cols"></colgroup>
      <thead><tr id="letters"></tr></thead>
      <tbody id="rows"></tbody>
    </table>
  </div>
  <div class="w-[17px] shrink-0 flex flex-col items-center bg-[#e3e7ec] border-l border-[#8b9098]">
    <div class="w-[14px] h-2 border border-[#7d838c] bg-white flex items-center justify-center"><span class="w-[7px] h-[2px] bg-[#8b9098]"></span></div>
    <button aria-label="Scroll up" class="h-[17px] flex items-center"><svg class="w-[9px] h-[5px]" viewBox="0 0 9 5"><path d="M0 5h9L4.500 0z" fill="#444"/></svg></button>
    <div class="w-[15px] h-[465px] flex items-center justify-center border border-[#868c96] rounded-[1px] bg-[linear-gradient(to_right,#fbfcfd,#d8dde5)]"><svg class="w-2 h-[7px]" viewBox="0 0 8 7"><path d="M0 .5h8M0 2.500h8M0 4.500h8M0 6.500h8" stroke="#7c838e"/></svg></div>
    <button aria-label="Scroll down" class="mt-auto h-4 flex items-center"><svg class="w-[9px] h-[5px]" viewBox="0 0 9 5"><path d="M0 0h9L4.500 5z" fill="#444"/></svg></button>
  </div>
</main>

<!-- Sheet tabs and horizontal scroll bar -->
<section class="flex shrink-0 h-[17px] bg-[#dde2e8] border-t border-[#8b9098]">
  <div class="basis-[804px] flex items-stretch text-[12px] leading-[13px] text-[#4a4a4a]">
    <div class="w-[63px] flex items-center justify-around px-[2px] pb-px border-r border-[#a6abb3]">
      <button aria-label="First sheet"><svg class="w-[7px] h-2" viewBox="0 0 7 8"><path d="M0 0h1.500v8H0zM7 0v8L2.500 4z" fill="#444"/></svg></button>
      <button aria-label="Previous sheet"><svg class="w-[5px] h-2" viewBox="0 0 5 8"><path d="M5 0v8L0 4z" fill="#444"/></svg></button>
      <button aria-label="Next sheet"><svg class="w-[5px] h-2" viewBox="0 0 5 8"><path d="M0 0v8l5-4z" fill="#444"/></svg></button>
      <button aria-label="Last sheet"><svg class="w-[7px] h-2" viewBox="0 0 7 8"><path d="M5.500 0H7v8H5.500zM0 0v8l4.500-4z" fill="#444"/></svg></button>
    </div>
    <button class="w-[90px] pb-px text-[11px] bg-[linear-gradient(to_bottom,#e2e6eb,#f4f6f8)] border-r border-[#a6abb3]">Membership</button>
    <button class="w-[93px] pb-[2px] font-semibold bg-white [clip-path:polygon(0_0,100%_0,88%_100%,5%_100%)]">Rekapitulasi</button>
    <button aria-label="Insert sheet" class="-ml-3"><svg class="w-[52px] h-4" viewBox="0 0 52 16"><path d="M.5 15.500 11.500.500M38.500 15.500 51.500.500" fill="none" stroke="#9aa0a8"/><path d="M20.500 4.500h12v10h-9c-3 0-3-3-3-4z" fill="#f2f7fd" stroke="#55719f"/><path d="M24 12.500h6v-3" fill="none" stroke="#a9c0e0" stroke-width="2"/><path d="M18.500 1v7M15 4.500h7M16 2l5 5M21 2l-5 5" stroke="#d78a1c"/><circle cx="18.500" cy="4.500" r="1.500" fill="#ffe28a"/></svg></button>
  </div>
  <div class="flex flex-1 items-stretch">
    <div class="w-2 h-4 border border-[#7d838c] bg-white flex items-center justify-center"><span class="w-px h-[7px] bg-[#8b9098]"></span></div>
    <button aria-label="Scroll left" class="w-[17px] flex items-center justify-center"><svg class="w-[5px] h-[9px]" viewBox="0 0 5 9"><path d="M5 0v9L0 4.500z" fill="#444"/></svg></button>
    <div class="w-[459px] flex items-center justify-center border border-t-0 border-[#868c96] rounded-[1px] bg-[linear-gradient(to_bottom,#fbfcfd,#d8dde5)]"><svg class="w-[7px] h-[7px]" viewBox="0 0 7 7"><path d="M.5 0v7M2.500 0v7M4.500 0v7M6.500 0v7" stroke="#7c838e"/></svg></div>
    <button aria-label="Scroll right" class="ml-auto w-[18px] flex items-center justify-center"><svg class="w-[5px] h-[9px]" viewBox="0 0 5 9"><path d="M0 0v9l5-4.500z" fill="#444"/></svg></button>
    <div class="w-2 h-4 mr-[17px] border border-[#7d838c] bg-white flex items-center justify-center"><span class="w-px h-[7px] bg-[#8b9098]"></span></div>
  </div>
</section>

<!-- Status bar -->
<footer class="flex shrink-0 h-[22px] items-center border-t border-t-[#9ba1a9] border-b-2 border-b-black bg-[linear-gradient(to_bottom,#eceef1,#d3d7dc_45%,#b9bdc3)] text-[#333]">
  <span class="w-[48px] pl-2 pb-px">Ready</span>
  <span class="w-px self-stretch bg-[#8f959d]"></span>
  <span class="pl-[9px] pb-px w-[75px]">Num Lock</span>
  <button aria-label="Record macro"><svg class="w-[15px] h-[13px]" viewBox="0 0 15 13"><rect x="1.500" y="1.500" width="13" height="11" fill="#fff" stroke="#4d72b0"/><path d="M2 2h12v3H2z" fill="#5f91dc"/><path d="M4 6.500h9M4 8.500h9M4 10.500h9" stroke="#7b9ccd" stroke-dasharray="2 1"/><circle cx="3" cy="3" r="3" fill="#d8422c"/></svg></button>
  <span class="w-px self-stretch bg-[#8f959d] ml-[10px]"></span>
  <span class="ml-auto pr-[10px] pb-px">Count: 2</span>
  <span class="w-px self-stretch bg-[#8f959d] mr-1"></span>
  <button aria-label="Normal view" class="w-[19px] h-[19px] flex items-center justify-center rounded-[2px] border border-[#c28a30] bg-[#ffdf6e]"><svg class="w-[13px] h-[11px]" viewBox="0 0 13 11"><path d="M.5.500h12v10H.5zM.5 3.500h12M.5 6.500h12M4.500.500v10M8.500.500v10" fill="#fff" stroke="#555"/></svg></button>
  <button aria-label="Page layout view" class="ml-[3px]"><svg class="w-[14px] h-3" viewBox="0 0 14 12"><rect x=".5" y=".5" width="13" height="11" fill="#a3a7ad" stroke="#555"/><path d="M3.500 2.500h7v7h-7z" fill="#fff" stroke="#555"/><path d="M5 4.500h4M5 6.500h4" stroke="#777"/></svg></button>
  <button aria-label="Page break preview" class="ml-[5px]"><svg class="w-[14px] h-3" viewBox="0 0 14 12"><rect x=".5" y=".5" width="13" height="11" fill="#a3a7ad" stroke="#555"/><path d="M.5.500h4v7h-4zM5.500.500h3v7h-3z" fill="#fff" stroke="#555"/></svg></button>
  <button class="ml-[11px] pb-px w-9 text-left">100%</button>
  <button aria-label="Zoom out"><svg class="w-4 h-4" viewBox="0 0 16 16"><circle cx="8" cy="8" r="7.200" fill="#f3f4f6" stroke="#666b72"/><path d="M4 8h8" stroke="#444" stroke-width="2"/></svg></button>
  <input type="range" aria-label="Zoom" min="0" max="100" value="50" class="w-[101px] h-4 appearance-none bg-[linear-gradient(#70767e,#70767e)] bg-[length:100%_1px] bg-center bg-no-repeat [&::-webkit-slider-thumb]:appearance-none [&::-webkit-slider-thumb]:w-[9px] [&::-webkit-slider-thumb]:h-3 [&::-webkit-slider-thumb]:bg-[#f5f6f8] [&::-webkit-slider-thumb]:border [&::-webkit-slider-thumb]:border-[#5d636b] [&::-webkit-slider-thumb]:rounded-b-[4px]">
  <button aria-label="Zoom in"><svg class="w-4 h-4" viewBox="0 0 16 16"><circle cx="8" cy="8" r="7.200" fill="#f3f4f6" stroke="#666b72"/><path d="M4 8h8M8 4v8" stroke="#444" stroke-width="2"/></svg></button>
</footer>

<script>
const widths = [26, 65, 64, 102, 64, 102, 119].concat(Array(12).fill(64), 63);
const letters = 'ABCDEFGHIJKLMNOPQRS'.split('');
document.getElementById('cols').innerHTML = widths.map(w => `<col style="width:${w}px">`).join('');

const corner = `<th class="h-5 p-0 bg-[#e1e4e9] border-r border-b border-[#a6abb3]" aria-label="Select all"><svg class="ml-auto mr-1 w-3 h-3" viewBox="0 0 12 12"><path d="M12 0v12H0z" fill="#b4b9c1"/></svg></th>`;
document.getElementById('letters').innerHTML = corner + letters.map(l => l === 'F'
  ? `<th scope="col" class="h-5 p-0 font-normal text-[#333] bg-[#a9a9a9] border-r border-b border-[#7d7d7d]">${l}</th>`
  : `<th scope="col" class="h-5 p-0 font-normal text-[#3b3b3b] bg-[#dfe2e7] border-r border-b border-[#a6abb3]">${l}</th>`).join('');

const head = ['Nomor', 'Nama', 'Keanggotaan', 'Iuran', 'Tanggal Joint', 'Tanggal Expired'];
const filter = `<button aria-label="Filter" class="w-4 h-[17px] shrink-0 flex items-center justify-center border border-[#9a9fa8] bg-[linear-gradient(to_bottom,#fff,#e4e7ec)]"><svg class="w-[7px] h-1"><use href="#caret"/></svg></button>`;
const rowHead = n => `<th scope="row" class="h-5 p-0 font-normal text-[#3b3b3b] bg-[#ffd966] border-r border-b border-[#c99a35]">${n}</th>`;
const blank = '<td class="h-5 p-0 border-r border-b border-[#dadcdd]"></td>';
const beforePicked = '<td class="h-5 p-0 border-b border-b-[#dadcdd] border-r-2 border-r-black"></td>';
const picked = '<td class="h-5 p-0 bg-[#b5d9ff] border-b border-b-[#c3d0df] border-l border-l-black border-r-2 border-r-black"></td>';
const afterPicked = '<td class="h-5 p-0 border-b border-b-[#dadcdd] border-r border-r-[#dadcdd] border-l border-l-black"></td>';
const handleCell = '<td class="relative h-5 p-0 border-b border-b-[#dadcdd] border-r border-r-[#dadcdd] border-l border-l-black"><span class="absolute -left-[3px] top-px w-[5px] h-[5px] bg-black"></span></td>';

let html = '<tr>' + rowHead(1) + head.map((t, i) => i === 5
  ? `<td class="h-5 p-0 bg-[#4f81bd] border-y border-l border-t-[#c07f2c] border-l-[#c07f2c] border-b-[#4f81bd] border-r-2 border-r-black"><div class="flex items-center justify-between h-[18px] pl-px font-bold text-white whitespace-nowrap"><span>${t}</span>${filter}</div></td>`
  : `<td class="h-5 p-0 bg-[#4f81bd] border-b border-[#95b3d7]"><div class="flex items-center justify-between h-[19px] pl-[2px] pr-[2px] font-bold text-white whitespace-nowrap"><span>${t}</span>${filter}</div></td>`).join('') + handleCell + blank.repeat(12) + '</tr>';

html += '<tr>' + rowHead(2) + ['0', '0', '0', 'FALSE', ''].map((t, i) =>
  `<td class="h-5 py-0 px-[2px] bg-[#dce6f1] border-b border-b-[#95b3d7] ${i === 4 ? 'border-r-2 border-r-black' : ''} ${t === 'FALSE' ? 'text-center' : 'text-right'}">${t}</td>`).join('') +
  '<td class="relative h-5 py-0 px-px bg-[#9fcbf6] border-b border-b-[#6f9fd8] border-l border-l-black border-r-2 border-r-black">-<span class="absolute right-0 bottom-0 w-[3px] h-[3px] bg-[#3f66a8]"></span></td>' + afterPicked + blank.repeat(12) + '</tr>';

for (let n = 3; n <= 26; n++) html += '<tr>' + rowHead(n) + blank.repeat(4) + beforePicked + picked + afterPicked + blank.repeat(12) + '</tr>';
document.getElementById('rows').innerHTML = html;
</script>
</body>
</html>
